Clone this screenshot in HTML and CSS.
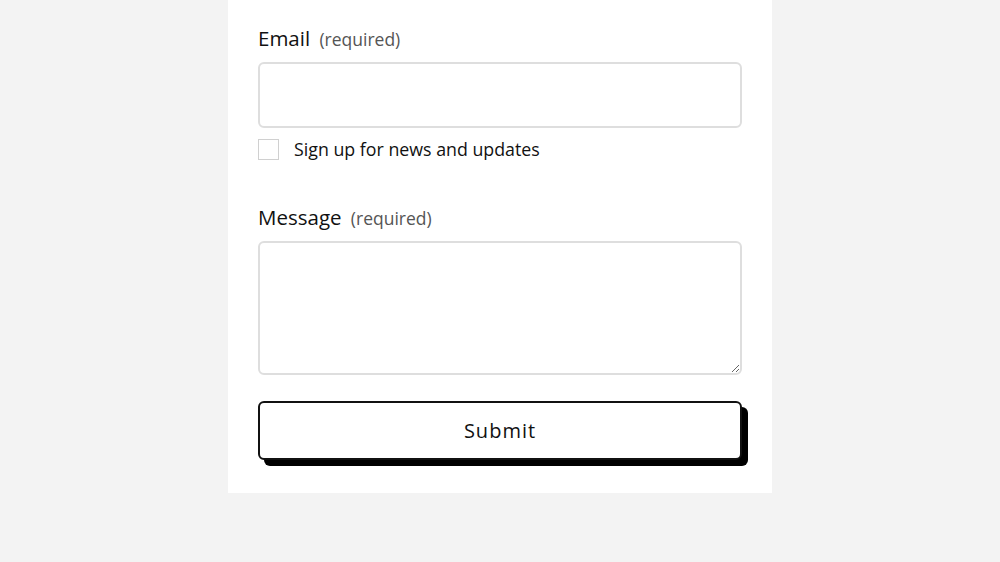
FILE: index.html
```html
<!DOCTYPE html>
<html lang="en">
<head>
    <meta charset="UTF-8">
    <meta name="viewport" content="width=device-width, initial-scale=1.0">
    <title>Contact</title>
    <link rel="stylesheet" href="styles.css">
</head>
<body>
    <div class="form-card">
        <form class="contact-form">
            <div class="field">
                <label class="field-label" for="email">Email <span class="req">(required)</span></label>
                <input class="text-input" type="email" id="email">
                <label class="check-row">
                    <input type="checkbox" class="check">
                    <span>Sign up for news and updates</span>
                </label>
            </div>

            <div class="field">
                <label class="field-label" for="message">Message <span class="req">(required)</span></label>
                <textarea class="text-area" id="message"></textarea>
            </div>

            <button type="submit" class="submit-btn">Submit</button>
        </form>
    </div>
</body>
</html>
```

FILE: styles.css
```css
body {
    font-family: "Open Sans", "Liberation Sans", sans-serif;
    background: #f3f3f3;
    margin: 0;
    padding: 0;
    color: #111;
}

.form-card {
    width: 544px;
    margin: 0 auto;
    background: #fff;
    padding: 24px 30px 33px;
    box-sizing: border-box;
}

.contact-form {
    display: flex;
    flex-direction: column;
}

.field {
    display: flex;
    flex-direction: column;
    margin-bottom: 40px;
}

.field-label {
    font-size: 20.5px;
    line-height: 28px;
    margin-bottom: 9px;
}

.req {
    font-size: 17.5px;
    color: #555;
    margin-left: 4px;
}

.text-input,
.text-area {
    display: block;
    width: 100%;
    box-sizing: border-box;
    border: 2px solid #dedede;
    border-radius: 6px;
    background: #fff;
    font-family: inherit;
    font-size: 17px;
    padding: 10px 14px;
}

.text-input {
    height: 66px;
}

.text-area {
    height: 134px;
    resize: vertical;
}

.check-row {
    display: flex;
    align-items: center;
    margin-top: 9px;
    margin-bottom: 2px;
    font-size: 17.8px;
}

.check {
    appearance: none;
    width: 21px;
    height: 21px;
    border: 1px solid #d0d0d0;
    margin: 0 15px 0 0;
    background: #fff;
}

.submit-btn {
    height: 59px;
    width: 484px;
    background: #fff;
    border: 2px solid #111;
    border-radius: 6px;
    box-shadow: 6px 6px 0 #000;
    font-family: inherit;
    font-size: 20px;
    letter-spacing: 1px;
    color: #111;
    cursor: pointer;
    margin-top: -14px;
}
```
